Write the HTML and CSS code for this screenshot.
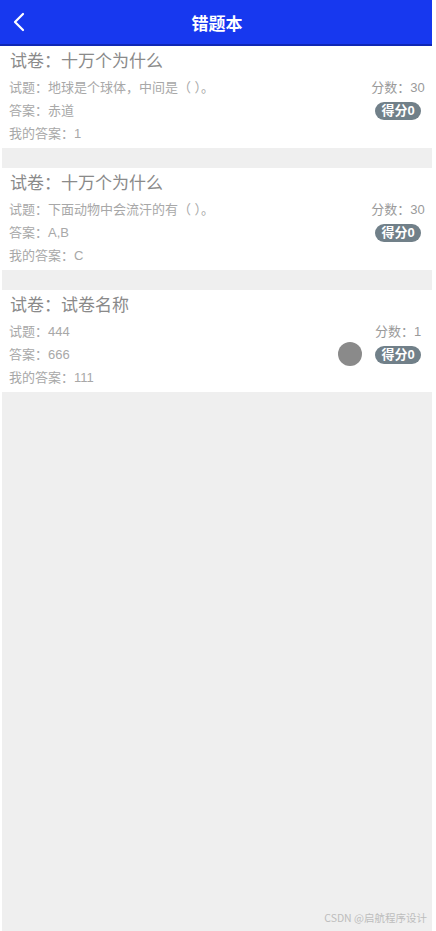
FILE: index.html
```html
<!DOCTYPE html>
<html lang="zh-CN">
<head>
<meta charset="utf-8">
<title>错题本</title>
<link rel="stylesheet" href="styles.css">
</head>
<body>
<div class="app">
  <header class="topbar">
    <span class="back">
      <svg width="14" height="20" viewBox="0 0 14 20"><path d="M11 2 L3 10 L11 18" fill="none" stroke="#fff" stroke-width="2.2" stroke-linecap="round" stroke-linejoin="round"/></svg>
    </span>
    <h1 class="title">错题本</h1>
  </header>
  <main class="list">
    <section class="card">
      <div class="card-title">试卷：十万个为什么</div>
      <div class="card-body">
        <div class="left">
          <div class="row">试题：地球是个球体，中间是（ ）。</div>
          <div class="row">答案：赤道</div>
          <div class="row">我的答案：1</div>
        </div>
        <div class="right">
          <div class="row score">分数：30</div>
          <div class="row"><span class="badge">得分0</span></div>
        </div>
      </div>
    </section>
    <section class="card">
      <div class="card-title">试卷：十万个为什么</div>
      <div class="card-body">
        <div class="left">
          <div class="row">试题：下面动物中会流汗的有（ ）。</div>
          <div class="row">答案：A,B</div>
          <div class="row">我的答案：C</div>
        </div>
        <div class="right">
          <div class="row score">分数：30</div>
          <div class="row"><span class="badge">得分0</span></div>
        </div>
      </div>
    </section>
    <section class="card">
      <div class="card-title">试卷：试卷名称</div>
      <div class="card-body">
        <div class="left">
          <div class="row">试题：444</div>
          <div class="row">答案：666</div>
          <div class="row">我的答案：111</div>
        </div>
        <div class="right">
          <div class="row score">分数：1</div>
          <div class="row"><span class="badge">得分0</span></div>
        </div>
      </div>
      <span class="touch-dot"></span>
    </section>
  </main>
  <div class="watermark">CSDN @启航程序设计</div>
</div>
</body>
</html>
```
FILE: styles.css
```css
* { box-sizing: border-box; }
html, body {
  margin: 0;
  padding: 0;
  background: #ffffff;
}
body {
  font-family: "Liberation Sans", "Noto Sans CJK SC", sans-serif;
}
.app {
  position: relative;
  width: 432px;
  height: 931px;
  display: flex;
  flex-direction: column;
}
.topbar {
  height: 46px;
  background: #1738ef;
  border-bottom: 2px solid #0f27b5;
  display: flex;
  align-items: center;
  justify-content: center;
  position: relative;
}
.back {
  position: absolute;
  left: 12px;
  top: 12px;
  display: flex;
}
.title {
  margin: 0;
  color: #ffffff;
  font-size: 17px;
  font-weight: bold;
  font-family: "Noto Sans CJK SC", sans-serif;
  padding-left: 2px;
}
.list {
  flex: 1;
  margin-left: 2px;
  background: #efefef;
  display: flex;
  flex-direction: column;
  gap: 20px;
}
.card {
  position: relative;
  background: #ffffff;
  height: 102px;
  padding: 2px 7px 4px 7px;
}
.card-title {
  font-size: 17px;
  line-height: 28px;
  color: #8a8a8a;
  padding-left: 1px;
}
.card-body {
  display: flex;
  justify-content: space-between;
}
.left, .right {
  display: flex;
  flex-direction: column;
}
.right {
  width: 54px;
  align-items: center;
}
.row {
  height: 23px;
  line-height: 23px;
  font-size: 13px;
  color: #a8a8a8;
  display: flex;
  align-items: center;
  white-space: nowrap;
}
.score {
  color: #9a9a9a;
}
.badge {
  display: inline-block;
  height: 18px;
  line-height: 18px;
  padding: 0 6px;
  border-radius: 9px;
  background: #718089;
  color: #ffffff;
  font-weight: bold;
  font-size: 13px;
}
.touch-dot {
  position: absolute;
  left: 336px;
  top: 52px;
  width: 24px;
  height: 24px;
  border-radius: 50%;
  background: #8a8a8a;
  filter: blur(0.6px);
}
.watermark {
  position: absolute;
  right: 5px;
  bottom: 6px;
  font-size: 10.5px;
  color: #bdbdbd;
  font-family: "Noto Sans CJK SC", sans-serif;
}
```
